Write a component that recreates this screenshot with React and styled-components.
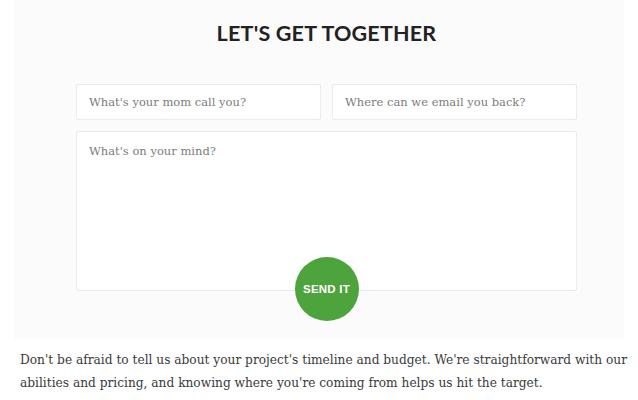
import React from 'react';
import styled, { createGlobalStyle } from 'styled-components';

const GlobalStyle = createGlobalStyle`
  html, body {
    margin: 0;
    padding: 0;
    background: #ffffff;
  }
  * {
    box-sizing: border-box;
  }
`;

const Page = styled.div`
  width: 638px;
  height: 400px;
  overflow: hidden;
`;

const Section = styled.section`
  margin: 0 14px;
  padding: 18px 0 18px 15px;
  background: #fbfbfb;
  display: flex;
  flex-direction: column;
  align-items: center;
`;

const Title = styled.h2`
  margin: 0;
  font-family: 'Lato', 'Noto Sans', sans-serif;
  font-weight: 700;
  font-size: 21.5px;
  line-height: 30px;
  letter-spacing: 0.2px;
  color: #222222;
  text-transform: uppercase;
`;

const Form = styled.form`
  margin-top: 36px;
  width: 501px;
  display: flex;
  flex-direction: column;
  align-items: center;
  gap: 11px;
`;

const Row = styled.div`
  width: 100%;
  display: grid;
  grid-template-columns: 1fr 1fr;
  gap: 11px;
`;

const fieldStyles = `
  width: 100%;
  border: 1px solid #ebebeb;
  border-radius: 2px;
  background: #ffffff;
  font-family: 'DejaVu Serif', 'Liberation Serif', serif;
  font-size: 11.5px;
  color: #555555;
  padding: 0 12px;
  outline: none;
  &::placeholder {
    color: #7c7c7c;
  }
`;

const Input = styled.input`
  ${fieldStyles}
  height: 36px;
`;

const TextArea = styled.textarea`
  ${fieldStyles}
  height: 160px;
  padding-top: 12px;
  resize: none;
`;

const SendButton = styled.button`
  width: 64px;
  height: 64px;
  margin-top: -45px;
  border: none;
  border-radius: 50%;
  background: #4ea43c;
  color: #ffffff;
  font-family: 'Liberation Sans', Arial, sans-serif;
  font-weight: 700;
  font-size: 11.5px;
  letter-spacing: 0.2px;
  cursor: pointer;
`;

const Blurb = styled.p`
  margin: 0;
  padding: 10px 0 0 20px;
  font-family: 'DejaVu Serif', 'Liberation Serif', serif;
  font-size: 12.2px;
  line-height: 23px;
  color: #3a3a3a;
`;

export default function App() {
  return (
    <Page>
      <GlobalStyle />
      <Section>
        <Title>Let's get together</Title>
        <Form onSubmit={(e) => e.preventDefault()}>
          <Row>
            <Input type='text' placeholder="What's your mom call you?" />
            <Input type='email' placeholder='Where can we email you back?' />
          </Row>
          <TextArea placeholder="What's on your mind?" />
          <SendButton type='submit'>SEND IT</SendButton>
        </Form>
      </Section>
      <Blurb>
        Don't be afraid to tell us about your project's timeline and budget. We're
        straightforward with our abilities and pricing, and knowing where you're
        coming from helps us hit the target.
      </Blurb>
    </Page>
  );
}
